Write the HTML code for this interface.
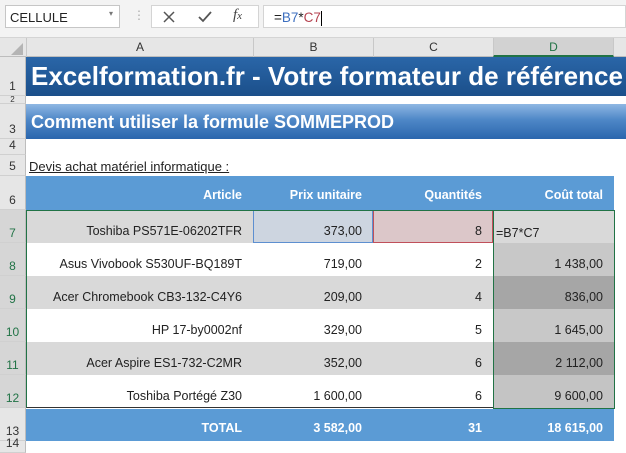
<!DOCTYPE html><html><head><meta charset="utf-8"><style>
*{margin:0;padding:0;box-sizing:border-box}
body{width:626px;height:451px;overflow:hidden;background:#fff;font-family:"Liberation Sans",sans-serif;position:relative}
.a{position:absolute}
.rh{position:absolute;left:0;width:26px;background:#e6e6e6;border-bottom:1px solid #d0d0d0;border-right:1px solid #bdbdbd;font-size:12px;color:#333;text-align:center;display:flex;align-items:flex-end;justify-content:center;padding-bottom:2px}
.rh.g{color:#217346;background:#d6d6d6}
.c{position:absolute;font-size:12.5px;color:#222;display:flex;align-items:center;justify-content:flex-end;padding-right:11px;white-space:nowrap}
.w{color:#fff;font-weight:bold}
</style></head><body>
<div class="a" style="left:0;top:0;width:626px;height:38px;background:#f3f3f3;border-bottom:1px solid #d4d4d4"></div>
<div class="a" style="left:5px;top:5px;width:115px;height:23px;background:#fff;border:1px solid #c6c6c6;font-size:13px;padding:4px 4px;color:#222">CELLULE<span style="position:absolute;right:6px;top:3px;font-size:8px;color:#777">▾</span></div>
<div class="a" style="left:133px;top:8px;color:#aaa;font-size:12px">⋮</div>
<div class="a" style="left:151px;top:5px;width:108px;height:23px;background:#fff;border:1px solid #d4d4d4"></div>
<svg class="a" style="left:162px;top:10px" width="14" height="14"><path d="M2 2L12 12M12 2L2 12" stroke="#555" stroke-width="1.5"/></svg>
<svg class="a" style="left:197px;top:10px" width="16" height="14"><path d="M2 7L6 11L14 2" stroke="#555" stroke-width="1.8" fill="none"/></svg>
<div class="a" style="left:233px;top:7px;font-family:'Liberation Serif',serif;font-style:italic;font-size:15px;color:#444">f<span style="font-size:11px">x</span></div>
<div class="a" style="left:263px;top:5px;width:363px;height:23px;background:#fff;border:1px solid #d4d4d4;font-size:13.5px;padding:4px 10px;color:#222">=<span style="color:#3d6fbf">B7</span>*<span style="color:#b5424f">C7</span><span style="display:inline-block;width:1px;height:15px;background:#000;vertical-align:middle"></span></div>
<!-- column headers -->
<div class="a" style="left:0;top:38px;width:626px;height:19px;background:#e6e6e6;border-bottom:1px solid #bdbdbd"></div>
<svg class="a" style="left:10px;top:42px" width="14" height="14"><path d="M13 1L13 13L1 13Z" fill="#b4b4b4"/></svg>
<div class="a" style="left:26px;top:38px;width:227px;height:19px;border-left:1px solid #c8c8c8;text-align:center;font-size:12px;line-height:19px;color:#333">A</div>
<div class="a" style="left:253px;top:38px;width:120px;height:19px;border-left:1px solid #c8c8c8;text-align:center;font-size:12px;line-height:19px;color:#333">B</div>
<div class="a" style="left:373px;top:38px;width:120px;height:19px;border-left:1px solid #c8c8c8;text-align:center;font-size:12px;line-height:19px;color:#333">C</div>
<div class="a" style="left:493px;top:38px;width:121px;height:19px;border-left:1px solid #c8c8c8;border-right:1px solid #c8c8c8;text-align:center;font-size:12px;line-height:19px;color:#217346;background:#d2d2d2;border-bottom:2px solid #217346">D</div>
<!-- row headers -->
<div class="rh" style="top:57px;height:39px">1</div>
<div class="rh" style="top:96px;height:8px;font-size:8px;padding:0;align-items:center">2</div>
<div class="rh" style="top:104px;height:35px">3</div>
<div class="rh" style="top:139px;height:16px">4</div>
<div class="rh" style="top:155px;height:21px">5</div>
<div class="rh" style="top:176px;height:34px">6</div>
<div class="rh g" style="top:210px;height:33px">7</div>
<div class="rh g" style="top:243px;height:33px">8</div>
<div class="rh g" style="top:276px;height:33px">9</div>
<div class="rh g" style="top:309px;height:33px">10</div>
<div class="rh g" style="top:342px;height:33px">11</div>
<div class="rh g" style="top:375px;height:33px">12</div>
<div class="rh" style="top:408px;height:33px">13</div>
<div class="rh" style="top:441px;height:12px">14</div>
<!-- title -->
<div class="a" style="left:26px;top:57px;width:600px;height:39px;background:linear-gradient(#2a66a8,#1b4f8a);color:#fff;font-weight:bold;font-size:26px;line-height:39px;padding-left:5px;white-space:nowrap;overflow:hidden">Excelformation.fr - Votre formateur de référence</div>
<div class="a" style="left:26px;top:104px;width:600px;height:35px;background:linear-gradient(#8fb7e3,#4e87c7 45%,#2a66ad);color:#fff;font-weight:bold;font-size:18px;line-height:37px;padding-left:5px;white-space:nowrap">Comment utiliser la formule SOMMEPROD</div>
<div class="a" style="left:29px;top:159px;font-size:13px;text-decoration:underline;color:#222">Devis achat matériel informatique :</div>
<!-- header row -->
<div class="a" style="left:26px;top:176px;width:588px;height:34px;background:#5b9bd5"></div>
<div class="c w" style="left:26px;top:176px;width:227px;height:38px">Article</div>
<div class="c w" style="left:253px;top:176px;width:120px;height:38px">Prix unitaire</div>
<div class="c w" style="left:373px;top:176px;width:120px;height:38px">Quantités</div>
<div class="c w" style="left:493px;top:176px;width:121px;height:38px">Coût total</div>
<!-- rows -->
<div class="a" style="left:26px;top:210px;width:588px;height:33px;background:#d9d9d9"></div>
<div class="a" style="left:26px;top:276px;width:588px;height:33px;background:#d9d9d9"></div>
<div class="a" style="left:26px;top:342px;width:588px;height:33px;background:#d9d9d9"></div>
<div class="a" style="left:493px;top:243px;width:121px;height:33px;background:#c8c8c8"></div>
<div class="a" style="left:493px;top:276px;width:121px;height:33px;background:#a6a6a6"></div>
<div class="a" style="left:493px;top:309px;width:121px;height:33px;background:#c8c8c8"></div>
<div class="a" style="left:493px;top:342px;width:121px;height:33px;background:#a6a6a6"></div>
<div class="a" style="left:493px;top:375px;width:121px;height:33px;background:#c4c4c4"></div>
<div class="a" style="left:253px;top:210px;width:120px;height:33px;background:#cdd5e0;border:1px solid #5d8fd0"></div>
<div class="a" style="left:373px;top:210px;width:120px;height:33px;background:#dcc7c9;border:1px solid #c0505a"></div>
<div class="a" style="left:26px;top:210px;width:468px;height:198px;border:1px solid #217346;border-bottom:1px solid #333;border-right:1px solid #333"></div>
<div class="a" style="left:493px;top:210px;width:122px;height:199px;border:1px solid #217346"></div>

<div class="c" style="left:26px;top:214px;width:227px;height:33px">Toshiba PS571E-06202TFR</div>
<div class="c" style="left:253px;top:214px;width:120px;height:33px">373,00</div>
<div class="c" style="left:373px;top:214px;width:120px;height:33px">8</div>
<div class="a" style="left:496px;top:226px;font-size:12.5px;color:#222">=B7*C7</div>

<div class="c" style="left:26px;top:247px;width:227px;height:33px">Asus Vivobook S530UF-BQ189T</div>
<div class="c" style="left:253px;top:247px;width:120px;height:33px">719,00</div>
<div class="c" style="left:373px;top:247px;width:120px;height:33px">2</div>
<div class="c" style="left:493px;top:247px;width:121px;height:33px">1 438,00</div>

<div class="c" style="left:26px;top:280px;width:227px;height:33px">Acer Chromebook CB3-132-C4Y6</div>
<div class="c" style="left:253px;top:280px;width:120px;height:33px">209,00</div>
<div class="c" style="left:373px;top:280px;width:120px;height:33px">4</div>
<div class="c" style="left:493px;top:280px;width:121px;height:33px">836,00</div>

<div class="c" style="left:26px;top:313px;width:227px;height:33px">HP 17-by0002nf</div>
<div class="c" style="left:253px;top:313px;width:120px;height:33px">329,00</div>
<div class="c" style="left:373px;top:313px;width:120px;height:33px">5</div>
<div class="c" style="left:493px;top:313px;width:121px;height:33px">1 645,00</div>

<div class="c" style="left:26px;top:346px;width:227px;height:33px">Acer Aspire ES1-732-C2MR</div>
<div class="c" style="left:253px;top:346px;width:120px;height:33px">352,00</div>
<div class="c" style="left:373px;top:346px;width:120px;height:33px">6</div>
<div class="c" style="left:493px;top:346px;width:121px;height:33px">2 112,00</div>

<div class="c" style="left:26px;top:379px;width:227px;height:33px">Toshiba Portégé Z30</div>
<div class="c" style="left:253px;top:379px;width:120px;height:33px">1 600,00</div>
<div class="c" style="left:373px;top:379px;width:120px;height:33px">6</div>
<div class="c" style="left:493px;top:379px;width:121px;height:33px">9 600,00</div>

<div class="a" style="left:26px;top:409px;width:588px;height:32px;background:#5b9bd5"></div>
<div class="c w" style="left:26px;top:411px;width:227px;height:33px">TOTAL</div>
<div class="c w" style="left:253px;top:411px;width:120px;height:33px">3 582,00</div>
<div class="c w" style="left:373px;top:411px;width:120px;height:33px">31</div>
<div class="c w" style="left:493px;top:411px;width:121px;height:33px">18 615,00</div>
</body></html>
